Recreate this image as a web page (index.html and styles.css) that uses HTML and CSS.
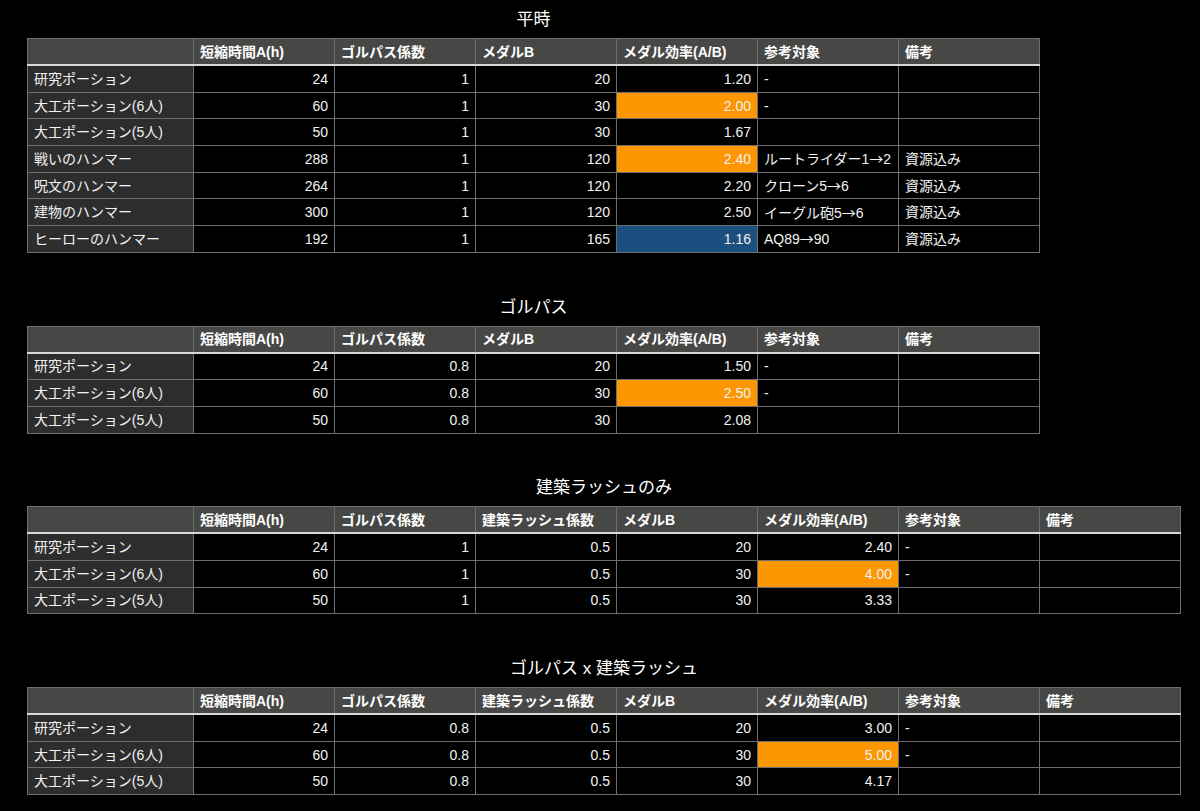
FILE: index.html
```html
<!DOCTYPE html>
<html lang="ja">
<head>
<meta charset="utf-8">
<title>メダル効率</title>
<link rel="stylesheet" href="styles.css">
</head>
<body>
<div class="page">

<section class="block">
  <h2 class="title">平時</h2>
  <table class="grid t7">
    <colgroup><col class="c-name"><col span="6" class="c-val"></colgroup>
    <thead>
      <tr><th></th><th>短縮時間A(h)</th><th>ゴルパス係数</th><th>メダルB</th><th>メダル効率(A/B)</th><th>参考対象</th><th>備考</th></tr>
    </thead>
    <tbody>
      <tr><td class="name">研究ポーション</td><td class="num">24</td><td class="num">1</td><td class="num">20</td><td class="num">1.20</td><td>-</td><td></td></tr>
      <tr><td class="name">大工ポーション(6人)</td><td class="num">60</td><td class="num">1</td><td class="num">30</td><td class="num hi-orange">2.00</td><td>-</td><td></td></tr>
      <tr><td class="name">大工ポーション(5人)</td><td class="num">50</td><td class="num">1</td><td class="num">30</td><td class="num">1.67</td><td></td><td></td></tr>
      <tr><td class="name">戦いのハンマー</td><td class="num">288</td><td class="num">1</td><td class="num">120</td><td class="num hi-orange">2.40</td><td>ルートライダー1<span class="arrow">→</span>2</td><td>資源込み</td></tr>
      <tr><td class="name">呪文のハンマー</td><td class="num">264</td><td class="num">1</td><td class="num">120</td><td class="num">2.20</td><td>クローン5<span class="arrow">→</span>6</td><td>資源込み</td></tr>
      <tr><td class="name">建物のハンマー</td><td class="num">300</td><td class="num">1</td><td class="num">120</td><td class="num">2.50</td><td>イーグル砲5<span class="arrow">→</span>6</td><td>資源込み</td></tr>
      <tr><td class="name">ヒーローのハンマー</td><td class="num">192</td><td class="num">1</td><td class="num">165</td><td class="num hi-blue">1.16</td><td>AQ89<span class="arrow">→</span>90</td><td>資源込み</td></tr>
    </tbody>
  </table>
</section>

<section class="block">
  <h2 class="title">ゴルパス</h2>
  <table class="grid t7">
    <colgroup><col class="c-name"><col span="6" class="c-val"></colgroup>
    <thead>
      <tr><th></th><th>短縮時間A(h)</th><th>ゴルパス係数</th><th>メダルB</th><th>メダル効率(A/B)</th><th>参考対象</th><th>備考</th></tr>
    </thead>
    <tbody>
      <tr><td class="name">研究ポーション</td><td class="num">24</td><td class="num">0.8</td><td class="num">20</td><td class="num">1.50</td><td>-</td><td></td></tr>
      <tr><td class="name">大工ポーション(6人)</td><td class="num">60</td><td class="num">0.8</td><td class="num">30</td><td class="num hi-orange">2.50</td><td>-</td><td></td></tr>
      <tr><td class="name">大工ポーション(5人)</td><td class="num">50</td><td class="num">0.8</td><td class="num">30</td><td class="num">2.08</td><td></td><td></td></tr>
    </tbody>
  </table>
</section>

<section class="block">
  <h2 class="title">建築ラッシュのみ</h2>
  <table class="grid t8">
    <colgroup><col class="c-name"><col span="7" class="c-val"></colgroup>
    <thead>
      <tr><th></th><th>短縮時間A(h)</th><th>ゴルパス係数</th><th>建築ラッシュ係数</th><th>メダルB</th><th>メダル効率(A/B)</th><th>参考対象</th><th>備考</th></tr>
    </thead>
    <tbody>
      <tr><td class="name">研究ポーション</td><td class="num">24</td><td class="num">1</td><td class="num">0.5</td><td class="num">20</td><td class="num">2.40</td><td>-</td><td></td></tr>
      <tr><td class="name">大工ポーション(6人)</td><td class="num">60</td><td class="num">1</td><td class="num">0.5</td><td class="num">30</td><td class="num hi-orange">4.00</td><td>-</td><td></td></tr>
      <tr><td class="name">大工ポーション(5人)</td><td class="num">50</td><td class="num">1</td><td class="num">0.5</td><td class="num">30</td><td class="num">3.33</td><td></td><td></td></tr>
    </tbody>
  </table>
</section>

<section class="block">
  <h2 class="title">ゴルパス x 建築ラッシュ</h2>
  <table class="grid t8">
    <colgroup><col class="c-name"><col span="7" class="c-val"></colgroup>
    <thead>
      <tr><th></th><th>短縮時間A(h)</th><th>ゴルパス係数</th><th>建築ラッシュ係数</th><th>メダルB</th><th>メダル効率(A/B)</th><th>参考対象</th><th>備考</th></tr>
    </thead>
    <tbody>
      <tr><td class="name">研究ポーション</td><td class="num">24</td><td class="num">0.8</td><td class="num">0.5</td><td class="num">20</td><td class="num">3.00</td><td>-</td><td></td></tr>
      <tr><td class="name">大工ポーション(6人)</td><td class="num">60</td><td class="num">0.8</td><td class="num">0.5</td><td class="num">30</td><td class="num hi-orange">5.00</td><td>-</td><td></td></tr>
      <tr><td class="name">大工ポーション(5人)</td><td class="num">50</td><td class="num">0.8</td><td class="num">0.5</td><td class="num">30</td><td class="num">4.17</td><td></td><td></td></tr>
    </tbody>
  </table>
</section>

</div>
</body>
</html>
```

FILE: styles.css
```css
html, body {
  margin: 0;
  padding: 0;
  background: #000;
}

body {
  font-family: "Liberation Sans", "Noto Sans CJK JP", sans-serif;
  color: #f2f2f2;
  font-size: 14px;
}

.page {
  padding: 8px 0 0 27px;
  display: flex;
  flex-direction: column;
  gap: 42.7px;
}

.block {
  width: max-content;
}

.title {
  margin: 0 0 6px 0;
  font-size: 17px;
  line-height: 24px;
  font-weight: normal;
  text-align: center;
  color: #fff;
}

.grid {
  border-collapse: collapse;
  table-layout: fixed;
  border: 1px solid #6e6e6e;
}

.t7 { width: 1013px; }
.t8 { width: 1154px; }

.c-name { width: 166px; }
.c-val { width: 141px; }

.grid th,
.grid td {
  border: 1px solid #6e6e6e;
  padding: 0 6px;
  line-height: 16px;
  white-space: nowrap;
  overflow: hidden;
}

.grid th {
  height: 25px;
  background: #474846;
  color: #fff;
  font-weight: bold;
  text-align: left;
  border-bottom: 2px solid #d8d8d8;
}

.grid td {
  height: 25.7px;
  background: #000;
  text-align: left;
}

.grid td.name {
  background: #2d2d2d;
}

.grid td.num {
  text-align: right;
}

.grid td.hi-orange {
  background: #fd9600;
}

.grid td.hi-blue {
  background: #1b4f7f;
}

.arrow {
  font-family: "Noto Sans CJK JP", sans-serif;
}
```
